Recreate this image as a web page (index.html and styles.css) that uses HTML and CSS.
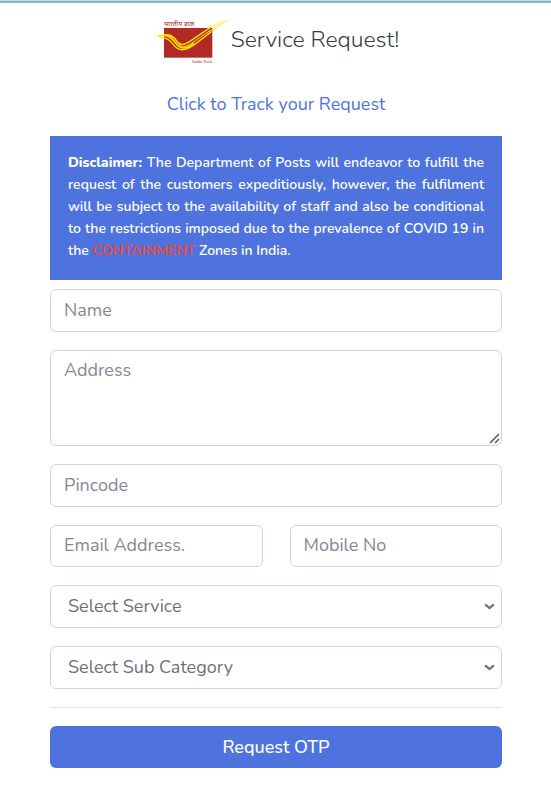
FILE: index.html
```
<!DOCTYPE html>
<html lang="en">
  <head>
    <meta charset="UTF-8" />
    <meta name="viewport" content="width=device-width, initial-scale=1.0" />
    <title>Service Request</title>
    <link rel="stylesheet" href="styles.css">
  </head>
  <body>
    <main class="page">
      <header class="brand">
        <svg class="logo" viewBox="40 58 234 138" role="img" aria-label="India Post">
          <text class="logo-hindi" x="72" y="80" font-size="20">भारतीय डाक</text>
          <rect x="73" y="85" width="145" height="89" fill="#b22a26" />
          <g fill="none" stroke="#ffe600" stroke-linecap="round">
            <path stroke-width="5" d="M58 108 C84 104 94 112 104 125 C122 151 139 150 161 131" />
            <path stroke-width="4" d="M66 114 C82 113 91 121 101 135 C121 161 143 149 165 134 L214 97" />
            <path stroke-width="4" d="M76 105 C91 104 103 112 110 122 C123 140 137 136 155 122 L214 82" />
            <path stroke-width="3" d="M90 108 C103 112 108 121 116 131 C128 147 143 140 159 128 L214 91" />
            <path stroke-width="2" d="M44 112 L70 109 M206 87 Q238 66 269 64 M208 95 Q230 77 253 70 M208 101 L242 77" />
            <path stroke-width="1" d="M206 82 L236 64" />
          </g>
          <text class="logo-name" x="157" y="190" font-size="15">India Post</text>
        </svg>
        <h1>Service Request!</h1>
      </header>

      <a class="track" href="#track">Click to Track your Request</a>

      <p class="disclaimer">
        <strong>Disclaimer:</strong> The Department of Posts will endeavor to fulfill the request of the customers expeditiously, however, the fulfilment will be subject to the availability of staff and also be conditional to the restrictions imposed due to the prevalence of COVID 19 in the <span class="alert">CONTAINMENT</span> Zones in India.
      </p>

      <form class="request">
        <input class="field" type="text" placeholder="Name" aria-label="Name" />
        <textarea class="field address" placeholder="Address" aria-label="Address"></textarea>
        <input class="field" type="text" placeholder="Pincode" aria-label="Pincode" />
        <div class="row">
          <input class="field" type="email" placeholder="Email Address." aria-label="Email Address" />
          <input class="field" type="tel" placeholder="Mobile No" aria-label="Mobile No" />
        </div>
        <div class="select">
          <select class="field" aria-label="Service">
            <option>Select Service</option>
          </select>
          <svg class="chevron" viewBox="0 0 10 6"><path d="M1 1 L5 4.5 L9 1" /></svg>
        </div>
        <div class="select">
          <select class="field" aria-label="Sub Category">
            <option>Select Sub Category</option>
          </select>
          <svg class="chevron" viewBox="0 0 10 6"><path d="M1 1 L5 4.5 L9 1" /></svg>
        </div>
        <hr />
        <button class="submit" type="button">Request OTP</button>
      </form>
    </main>
  </body>
</html>
```
FILE: styles.css
```
* {
  margin: 0;
  padding: 0;
  box-sizing: border-box;
}

body {
  font-family: Nunito, Lato, sans-serif;
  font-size: 18px;
  line-height: 27px;
  color: #858796;
  background: #fff;
  border-top: 1px solid #b0e0e3;
}

.page {
  padding: 16px 49px 38px 50px;
  border-top: 2px solid #8fb5b8;
}

/* Heading */
.brand {
  display: flex;
  justify-content: center;
  align-items: center;
}

.logo {
  width: 78px;
  height: 46px;
}

.logo text {
  fill: #b22a26;
}

.logo-hindi {
  font-family: "Noto Sans", sans-serif;
}

.logo-name {
  font-family: "Liberation Serif", serif;
}

h1 {
  padding-bottom: 4px;
  font-size: 23px;
  font-weight: 300;
  line-height: 28px;
  color: #3a3b45;
}

.track {
  display: block;
  margin-top: 26px;
  text-align: center;
  color: #4e73df;
  text-decoration: none;
}

/* Disclaimer */
.disclaimer {
  margin-top: 18px;
  padding: 16px 18px 18px;
  font-size: 14px;
  font-weight: 600;
  line-height: 22px;
  text-align: justify;
  color: #fff;
  background: #4e73df;
}

.disclaimer strong {
  font-weight: 800;
}

.alert {
  color: #e74a3b;
  font-weight: 700;
}

/* Form */
.request {
  display: flex;
  flex-direction: column;
  gap: 18px;
  margin-top: 9px;
}

.field {
  display: block;
  width: 100%;
  height: 43px;
  padding: 5px 13px 7px;
  font: inherit;
  color: #6e707e;
  background: #fff;
  border: 1px solid #d1d3e2;
  border-radius: 6px;
}

.field::placeholder {
  color: #858796;
  opacity: 1;
}

.address {
  height: 96px;
  padding-top: 6px;
  resize: vertical;
}

.address::-webkit-resizer {
  background: url("data:image/svg+xml,%3Csvg xmlns='http://www.w3.org/2000/svg' viewBox='0 0 15 15'%3E%3Cpath d='M4 13 L13 4 M9 13 L13 9' stroke='%23555' stroke-width='1.5'/%3E%3C/svg%3E") no-repeat;
}

.row {
  display: grid;
  grid-template-columns: 1fr 1fr;
  gap: 27px;
}

.row .field {
  height: 42px;
}

.select {
  position: relative;
}

.select .field {
  padding: 6px 17px;
  appearance: none;
}

.chevron {
  position: absolute;
  top: 18px;
  right: 7px;
  width: 11px;
  height: 7px;
  fill: none;
  stroke: #6e707e;
  stroke-width: 2;
  pointer-events: none;
}

hr {
  border: 0;
  border-top: 1px solid #e3e4e9;
}

.submit {
  height: 42px;
  font: inherit;
  font-weight: 500;
  color: #fff;
  background: #4e73df;
  border: 0;
  border-radius: 6px;
  cursor: pointer;
}
```
